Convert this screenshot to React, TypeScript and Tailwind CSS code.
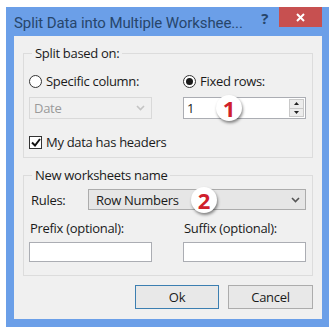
import React from 'react';

function Radio({ checked }: { checked?: boolean }) {
  return (
    <span className="w-[13px] h-[13px] rounded-full border border-[#333] bg-white flex items-center justify-center shrink-0">
      {checked && <span className="w-[7px] h-[7px] rounded-full bg-[#1a1a1a]" />}
    </span>
  );
}

function Chevron({ color }: { color: string }) {
  return (
    <svg width="9" height="6" viewBox="0 0 9 6">
      <path d="M1 1 L4.5 4.5 L8 1" fill="none" stroke={color} strokeWidth="1.6" />
    </svg>
  );
}

function Badge({ n }: { n: string }) {
  return (
    <span className="w-[26px] h-[26px] rounded-full bg-white shadow-[1px_2px_3px_rgba(0,0,0,0.45)] flex items-center justify-center text-[22px] leading-none font-bold text-[#d0202c]">
      {n}
    </span>
  );
}

export default function App() {
  return (
    <div className="w-[335px] h-[335px] bg-white pt-[7px] pl-[6px] text-[13px] leading-[16px] tracking-[-0.3px] text-[#1a1a1a] [font-family:'Open_Sans',sans-serif]">
      <div className="w-[323px] h-[320px] bg-[#6b9fe8] flex flex-col pl-[8px] pr-[7px] pb-[8px]">
        {/* title bar */}
        <div className="h-[29px] flex items-start shrink-0">
          <div className="pt-[6px] text-[15px] leading-[20px] text-[#27466b] tracking-[-0.1px] flex-1 whitespace-nowrap overflow-hidden [font-family:Roboto,sans-serif]">
            Split Data into Multiple Workshee...
          </div>
          <div className="pt-[3px] w-[16px] text-right text-[15px] font-bold text-[#27466b] mr-[11px]">?</div>
          <div className="w-[43px] h-[20px] bg-[#c75050] flex items-center justify-center">
            <svg width="9" height="9" viewBox="0 0 9 9">
              <path d="M1 1 L8 8 M8 1 L1 8" stroke="white" strokeWidth="2" />
            </svg>
          </div>
        </div>

        {/* client area */}
        <div className="flex-1 bg-[#f0f0f0] px-[9px] pt-[9px] flex flex-col">
          <fieldset className="border border-[#dcdcdc] pl-[5px] pr-[6px] pb-[7px]">
            <legend className="ml-[3px] px-[3px]">Split based on:</legend>
            <div className="grid grid-cols-[123px_123px] gap-x-[31px] pt-[12px]">
              <div className="flex items-center gap-[4px] h-[16px]">
                <Radio />
                <span>Specific column:</span>
              </div>
              <div className="flex items-center gap-[4px] h-[16px]">
                <Radio checked />
                <span>Fixed rows:</span>
              </div>
              <div className="mt-[8px] h-[22px] border border-[#d9d9d9] bg-[#f0f0f0] flex items-center justify-between pl-[4px] pr-[6px] text-[#9a9a9a]">
                <span>Date</span>
                <Chevron color="#c4c4c4" />
              </div>
              <div className="mt-[8px] h-[22px] border border-[#abadb3] bg-white flex items-center justify-between pl-[3px] pr-[1px] relative">
                <span>1</span>
                <div className="w-[15px] h-[18px] flex flex-col border border-[#c9c9c9]">
                  <div className="flex-1 bg-[#ececec] border-b border-[#c9c9c9] flex items-center justify-center">
                    <svg width="5" height="3" viewBox="0 0 5 3"><path d="M0 3 L2.5 0 L5 3 Z" fill="#222" /></svg>
                  </div>
                  <div className="flex-1 bg-[#ececec] flex items-center justify-center">
                    <svg width="5" height="3" viewBox="0 0 5 3"><path d="M0 0 L2.5 3 L5 0 Z" fill="#222" /></svg>
                  </div>
                </div>
                <div className="absolute left-[32px] top-[-3px]">
                  <Badge n="1" />
                </div>
              </div>
              <div className="col-span-2 mt-[15px] flex items-center gap-[4px] h-[16px]">
                <span className="w-[13px] h-[13px] border border-[#333] bg-white flex items-center justify-center">
                  <svg width="10" height="9" viewBox="0 0 10 9">
                    <path d="M1 4.5 L4 7.5 L9 1" fill="none" stroke="#111" strokeWidth="2" />
                  </svg>
                </span>
                <span>My data has headers</span>
              </div>
            </div>
          </fieldset>

          <fieldset className="mt-[9px] border border-[#dcdcdc] pl-[5px] pr-[6px] pb-[13px]">
            <legend className="ml-[3px] px-[3px]">New worksheets name</legend>
            <div className="flex items-center pt-[6px]">
              <span className="w-[59px] pl-[2px]">Rules:</span>
              <div className="flex-1 h-[21px] border border-[#acacac] bg-[#e6e6e6] flex items-center justify-between pl-[7px] pr-[5px] relative">
                <span>Row Numbers</span>
                <Chevron color="#555" />
                <div className="absolute left-[102px] top-[-3px]">
                  <Badge n="2" />
                </div>
              </div>
            </div>
            <div className="grid grid-cols-[123px_123px] gap-x-[31px] pt-[10px]">
              <span className="pl-[1px]">Prefix (optional):</span>
              <span className="pl-[1px]">Suffix (optional):</span>
              <div className="mt-[6px] h-[20px] border border-[#abadb3] bg-white" />
              <div className="mt-[6px] h-[20px] border border-[#abadb3] bg-white" />
            </div>
          </fieldset>

          <div className="flex justify-end gap-[9px] mt-[9px]">
            <button className="w-[84px] h-[24px] border border-[#3c7fb1] bg-[#e8e8e8] flex items-center justify-center">
              Ok
            </button>
            <button className="w-[85px] h-[24px] border border-[#acacac] bg-[#e8e8e8] flex items-center justify-center">
              Cancel
            </button>
          </div>
        </div>
      </div>
    </div>
  );
}
